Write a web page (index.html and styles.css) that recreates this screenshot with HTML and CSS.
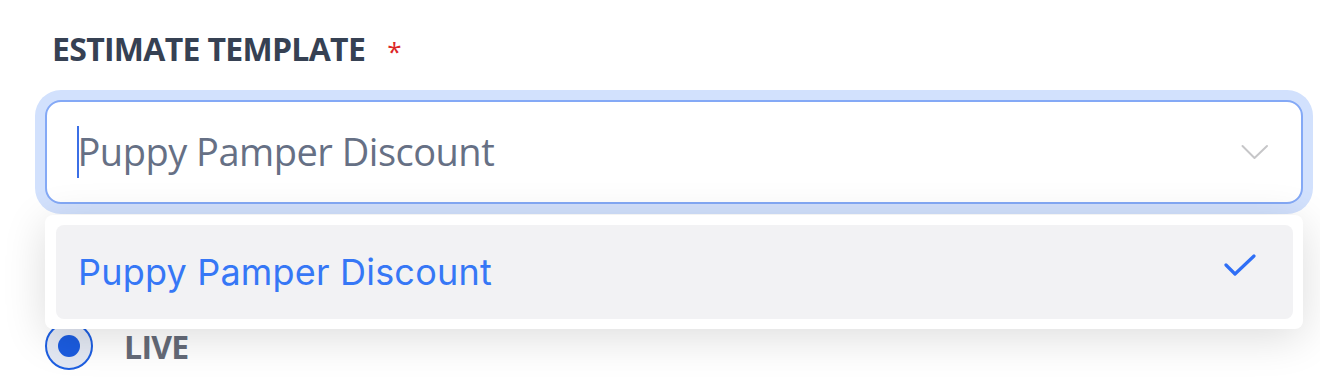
FILE: index.html
```html
<!DOCTYPE html>
<html lang="en">
<head>
<meta charset="utf-8">
<title>Estimate template</title>
<link rel="stylesheet" href="styles.css">
</head>
<body>
<div class="page">
  <div class="field">
    <div class="label">ESTIMATE TEMPLATE<span class="req">*</span></div>
    <div class="select-wrap">
      <div class="select">
        <span class="caret"></span>
        <span class="value">Puppy Pamper Discount</span>
        <svg class="chevron" width="28" height="16" viewBox="0 0 28 16"><path d="M1.5 2 L13.5 14 L26 2" fill="none" stroke="#c6c6c8" stroke-width="2" stroke-linecap="round" stroke-linejoin="round"/></svg>
      </div>
      <div class="menu">
        <div class="option">
          <span class="option-text">Puppy Pamper Discount</span>
          <svg class="check" width="34" height="24" viewBox="0 0 34 24"><path d="M3 12 L12 21 L31 3" fill="none" stroke="#2f6ff6" stroke-width="3.2" stroke-linecap="round" stroke-linejoin="round"/></svg>
        </div>
      </div>
    </div>
  </div>
  <div class="radio-row">
    <span class="radio"><span class="dot"></span></span>
    <span class="radio-label">LIVE</span>
  </div>
</div>
</body>
</html>
```

FILE: styles.css
```css
html, body {
  margin: 0;
  padding: 0;
  background: #ffffff;
}
body {
  width: 1320px;
  height: 383px;
  overflow: hidden;
  font-family: "Open Sans", "Noto Sans", sans-serif;
}
.page {
  padding: 29px 17px 0 45px;
}
.field {
  display: flex;
  flex-direction: column;
}
.label {
  margin-left: 7px;
  font-size: 32px;
  font-weight: 700;
  color: #364153;
  line-height: 40px;
  letter-spacing: -0.7px;
  display: flex;
  align-items: baseline;
}
.req {
  color: #dc2626;
  font-size: 26px;
  font-weight: 400;
  margin-left: 22px;
  letter-spacing: 0;
}
.select-wrap {
  position: relative;
  margin-top: 29px;
}
.select {
  height: 100px;
  border: 2px solid #84a9f6;
  border-radius: 16px;
  box-shadow: 0 0 0 10px #d2e1fd;
  background: #ffffff;
  display: flex;
  align-items: center;
  padding: 0 32px 0 30px;
}
.caret {
  width: 1.5px;
  height: 52px;
  background: #3b6fe6;
  margin-right: -1px;
}
.value {
  flex: 1;
  font-size: 38px;
  color: #667085;
  letter-spacing: -0.5px;
  line-height: 52px;
  margin-top: -3px;
}
.chevron {
  display: block;
}
.menu {
  position: absolute;
  left: 0;
  right: 0;
  top: calc(100% + 11px);
  height: 94px;
  padding: 10px 10px 10px 11px;
  background: #ffffff;
  border-radius: 8px;
  box-shadow: 0 8px 44px rgba(0, 0, 0, 0.14);
  z-index: 2;
}
.option {
  height: 94px;
  background: #f2f2f4;
  border-radius: 8px;
  display: flex;
  align-items: center;
  padding: 0 36px 0 22px;
}
.option-text {
  flex: 1;
  font-family: Inter, "Noto Sans", sans-serif;
  font-size: 36px;
  letter-spacing: 0.2px;
  color: #3677f6;
  line-height: 44px;
}
.check {
  display: block;
  margin-top: -14px;
}
.radio-row {
  display: flex;
  align-items: center;
  margin-top: 118px;
}
.radio {
  width: 44px;
  height: 44px;
  border: 2px solid #1d5fe2;
  border-radius: 50%;
  background: #e3e8f3;
  display: flex;
  align-items: center;
  justify-content: center;
}
.dot {
  width: 22px;
  height: 22px;
  border-radius: 50%;
  background: #1b5ce0;
}
.radio-label {
  margin-left: 31px;
  font-size: 32px;
  font-weight: 700;
  color: #656b78;
  letter-spacing: -0.7px;
}
```
